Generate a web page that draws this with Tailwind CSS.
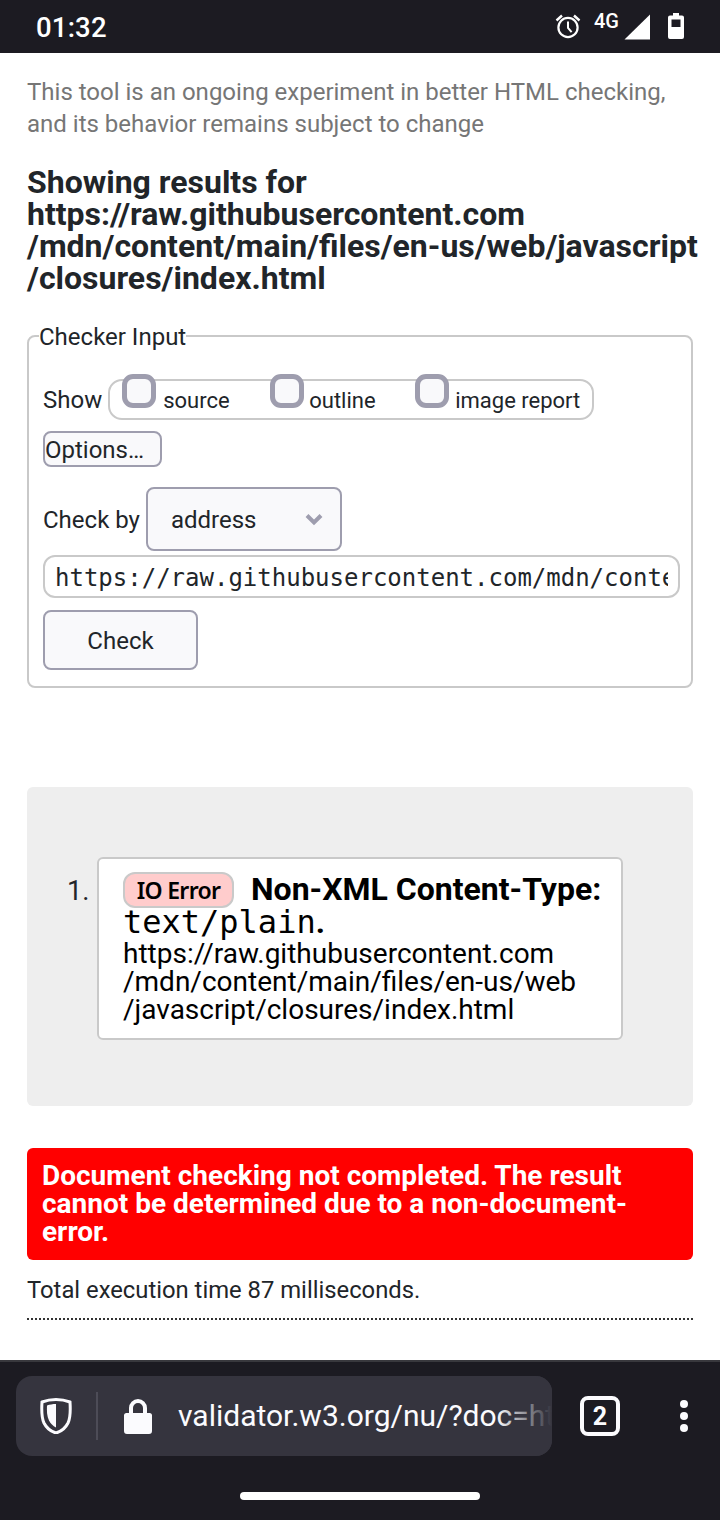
<!DOCTYPE html>
<html lang="en">
<head>
<meta charset="utf-8">
<script src="https://cdn.jsdelivr.net/npm/@tailwindcss/browser@4"></script>
</head>
<body class="m-0 bg-white">
<div class="w-[720px] h-[1520px] flex flex-col overflow-hidden bg-white font-['Roboto',sans-serif] text-[#212529]">
  <!-- status bar -->
  <div class="h-[53px] shrink-0 bg-[#1c1b22] flex items-center pl-[36px] pr-[36px] text-white">
    <span class="text-[27.500px] font-medium leading-none tracking-[0.2px] mt-[3px]">01:32</span>
    <div class="ml-auto flex items-start h-[53px]">
      <svg class="mt-[12px] shrink-0" width="28" height="28" viewBox="0 0 28 28" fill="none" stroke="#fff"><circle cx="14" cy="15.500" r="9.600" stroke-width="2.200"/><path d="M14 9.500v6.500l3.600 4.200" stroke-width="2"/><path d="M2.500 8.500 8 3.500M25.500 8.500 20 3.500" stroke-width="2.400"/></svg>
      <span class="ml-[12px] mt-[11px] w-[26px] text-[20px] font-medium leading-[20px]">4G</span>
      <svg class="ml-[4px] mt-[14px] shrink-0" width="26" height="26" viewBox="0 0 26 26"><path d="M26 0.500V25.500H0.500z" fill="#fff"/></svg>
      <svg class="ml-[18px] mt-[13px] shrink-0" width="16" height="26" viewBox="0 0 16 26"><path fill-rule="evenodd" d="M5 0h6v2.500h3a2 2 0 0 1 2 2V24a2 2 0 0 1-2 2H2a2 2 0 0 1-2-2V4.500a2 2 0 0 1 2-2h3zM3.500 6.500V14h9V6.500z" fill="#fff"/></svg>
    </div>
  </div>

  <!-- page -->
  <main class="flex-1 min-h-0 px-[27px] pt-[23px]">
    <p class="text-[24px] leading-[32px] text-[#767676]">This tool is an ongoing experiment in better HTML checking, and its behavior remains subject to change</p>
    <h2 class="mt-[26px] text-[32px] font-bold leading-[32px] whitespace-nowrap">Showing results for<br>https://raw.githubusercontent.com<br>/mdn/content/main/files/en-us/web/javascript<br>/closures/index.html</h2>

    <fieldset class="mt-[27px] h-[367px] min-w-0 border-2 border-[#c9c9c9] rounded-[8px] pl-[14px] pr-[11px]">
      <legend class="text-[24px] leading-[28px] -ml-[4px] px-0 pt-[2px]">Checker Input</legend>
      <div class="flex items-start mt-[28px] h-[41px]">
        <span class="text-[24px] leading-[28px] mt-[7px]">Show</span>
        <div class="ml-[6px] w-[486px] h-[41px] border-2 border-[#c9c9c9] rounded-[14px] flex items-start pl-[12px] text-[22px] leading-[28px]">
          <span class="block size-[34px] -mt-[7px] border-[5px] border-[#9e9dae] bg-[#f9f9fb] rounded-[11px] shrink-0"></span>
          <span class="ml-[7px] mt-[6px] w-[107px]">source</span>
          <span class="block size-[34px] -mt-[7px] border-[5px] border-[#9e9dae] bg-[#f9f9fb] rounded-[11px] shrink-0"></span>
          <span class="ml-[5px] mt-[6px] w-[106px]">outline</span>
          <span class="block size-[34px] -mt-[7px] border-[5px] border-[#9e9dae] bg-[#f9f9fb] rounded-[11px] shrink-0"></span>
          <span class="ml-[6px] mt-[6px] whitespace-nowrap">image report</span>
        </div>
      </div>
      <div class="mt-[11px] w-[119px] h-[36px] border-2 border-[#9e9dae] bg-[#f9f9fb] rounded-[8px] text-[24px] leading-[34px] whitespace-nowrap">Options…</div>
      <div class="flex items-center mt-[20px] h-[64px]">
        <span class="text-[24px] leading-[28px] pt-[1px]">Check by</span>
        <div class="ml-[6px] w-[196px] h-[64px] border-2 border-[#9e9dae] bg-[#f9f9fb] rounded-[8px] flex items-center pl-[23px] pr-[16px] text-[24px]">
          <span class="pt-[1px]">address</span>
          <svg class="ml-auto" width="20" height="14" viewBox="0 0 20 14" fill="none"><path d="M3 3.500 10 10.500 17 3.500" stroke="#9e9dae" stroke-width="4"/></svg>
        </div>
      </div>
      <div class="mt-[4px] w-[637px] h-[43px] border-2 border-[#c9c9c9] rounded-[12px] pl-[10px] pr-[10px]">
        <div class="overflow-hidden font-['DejaVu_Sans_Mono',monospace] text-[24px] leading-[42px] h-[39px] whitespace-nowrap">https://raw.githubusercontent.com/mdn/content/main/files</div>
      </div>
      <div class="mt-[12px] w-[155px] h-[60px] border-2 border-[#9e9dae] bg-[#f9f9fb] rounded-[8px] flex items-center justify-center text-[24px] pt-[2px]">Check</div>
    </fieldset>

    <section class="mt-[99px] h-[319px] bg-[#eeeeee] rounded-[6px] pt-[70px] pl-[40px] flex items-start">
      <span class="w-[30px] mt-[20px] text-[27px] leading-[28px] text-[#212529]">1.</span>
      <div class="w-[526px] h-[183px] border-2 border-[#c9c9c9] rounded-[6px] bg-white pl-[24px] pt-[12px] text-black">
        <div class="flex items-start h-[36px]">
          <span class="mt-[1px] pt-[1px] w-[111px] h-[36px] border-2 border-[#c9c9c9] bg-[#ffcccc] rounded-[12px] flex items-center justify-center font-['Noto_Sans',sans-serif] font-semibold text-[23px] tracking-[-0.7px] leading-none">IO Error</span>
          <span class="ml-[17px] mt-[1px] text-[32px] font-bold leading-[34px] whitespace-nowrap">Non-XML Content-Type:</span>
        </div>
        <div class="font-['DejaVu_Sans_Mono',monospace] text-[32px] leading-[32px] -mt-[1px]">text/plain<span class="font-['Roboto',sans-serif] font-bold">.</span></div>
        <div class="text-[28px] leading-[28px] mt-[2px] whitespace-nowrap">https://raw.githubusercontent.com<br>/mdn/content/main/files/en-us/web<br>/javascript/closures/index.html</div>
      </div>
    </section>

    <div class="mt-[42px] h-[112px] bg-[#ff0000] rounded-[6px] px-[15px] pt-[14px] text-white font-bold text-[28px] leading-[28px] whitespace-nowrap">Document checking not completed. The result<br>cannot be determined due to a non-document-<br>error.</div>
    <p class="mt-[16px] text-[23.800px] leading-[28px]">Total execution time 87 milliseconds.</p>
    <div class="mt-[14px] border-t-2 border-dotted border-[#333]"></div>
  </main>

  <!-- browser toolbar -->
  <div class="h-[160px] shrink-0 bg-[#1c1b22] border-t-2 border-[#38383d] flex flex-col">
    <div class="flex items-center h-[80px] mt-[14px] pl-[16px] shrink-0">
      <div class="relative w-[536px] h-[80px] shrink-0 bg-[#35343e] rounded-[16px] flex items-center pl-[24px] overflow-hidden text-[#fbfbfe]">
        <svg class="shrink-0" width="32" height="36" viewBox="0 0 32 36" fill="none"><path d="M16 1.500C21 1.500 26 2.500 30 4c.6 9 .8 15-2 21-2.500 5-7 8.500-12 10C11 33.500 6.500 30 4 25 1.200 19 1.400 13 2 4c4-1.500 9-2.500 14-2.500z" stroke="#fbfbfe" stroke-width="3"/><path d="M16 6c-3.500 0-6 .5-9 1.500-.3 6 0 11 2 15 1.500 3 4 5.500 7 7z" fill="#fbfbfe"/></svg>
        <span class="ml-[24px] w-[2px] h-[48px] shrink-0 bg-[#4d4c57]"></span>
        <svg class="ml-[26px] shrink-0" width="28" height="36" viewBox="0 0 28 36"><path fill-rule="evenodd" d="M5 15V10a9 9 0 0 1 18 0v5h2.500A2.500 2.500 0 0 1 28 17.500V33a3 3 0 0 1-3 3H3a3 3 0 0 1-3-3V17.500A2.500 2.500 0 0 1 2.500 15zM9 15h10v-5a5 5 0 0 0-10 0z" fill="#fbfbfe"/></svg>
        <span class="ml-[26px] text-[30px] leading-none whitespace-nowrap">validator.w3.org/nu/?doc=https</span>
        <span class="absolute right-0 top-0 h-full w-[56px] bg-linear-to-r from-[#35343e]/0 to-[#35343e]"></span>
      </div>
      <div class="ml-[28px] size-[40px] shrink-0 border-[4px] border-[#fbfbfe] rounded-[8px] flex items-center justify-center text-[25px] font-bold leading-none text-[#fbfbfe]">2</div>
      <div class="ml-[60px] flex flex-col gap-[4px] shrink-0">
        <span class="block size-[8px] rounded-full bg-[#fbfbfe]"></span>
        <span class="block size-[8px] rounded-full bg-[#fbfbfe]"></span>
        <span class="block size-[8px] rounded-full bg-[#fbfbfe]"></span>
      </div>
    </div>
    <div class="mt-[36px] mx-auto w-[240px] h-[8px] rounded-full bg-white shrink-0"></div>
  </div>
</div>
</body>
</html>
